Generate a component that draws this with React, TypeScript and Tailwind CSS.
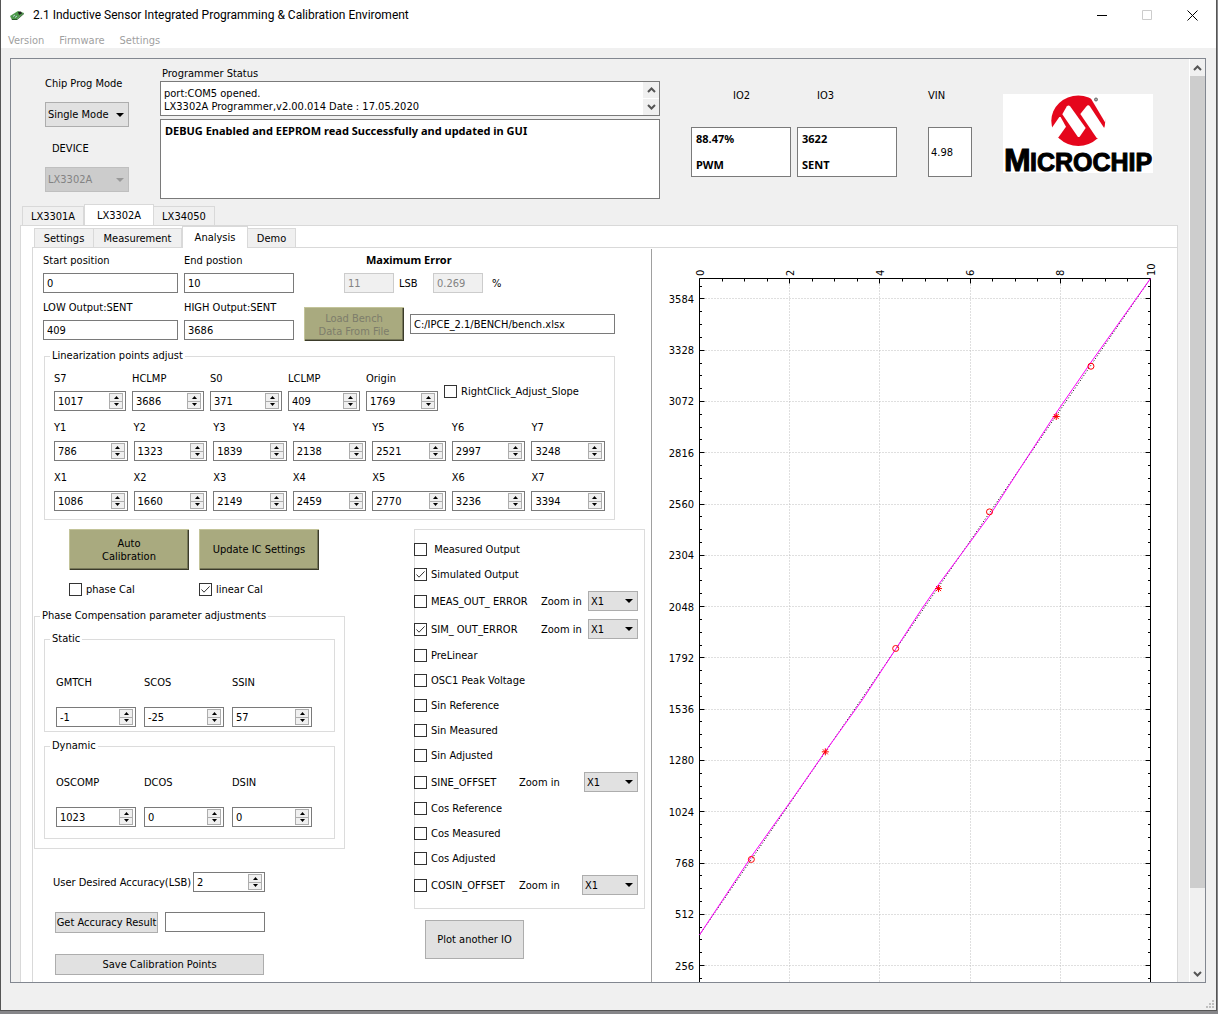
import { useId } from "react";
import type { ReactNode } from "react";
import clsx from "clsx";

const clampFields = [
  { name: "S7", value: "1017" },
  { name: "HCLMP", value: "3686" },
  { name: "S0", value: "371" },
  { name: "LCLMP", value: "409" },
  { name: "Origin", value: "1769" },
];

const yFields = ["786", "1323", "1839", "2138", "2521", "2997", "3248"];
const xFields = ["1086", "1660", "2149", "2459", "2770", "3236", "3394"];

const staticFields = [
  { name: "GMTCH", value: "-1" },
  { name: "SCOS", value: "-25" },
  { name: "SSIN", value: "57" },
];

const dynamicFields = [
  { name: "OSCOMP", value: "1023" },
  { name: "DCOS", value: "0" },
  { name: "DSIN", value: "0" },
];

type Trace = {
  name: string;
  checked?: boolean;
  zoom?: { label: string; select: string };
};

const traces: Trace[] = [
  { name: "\u00a0Measured Output" },
  { name: "Simulated Output", checked: true },
  { name: "MEAS_OUT_ ERROR", zoom: { label: "w-[127px]", select: "w-[50px]" } },
  { name: "SIM_ OUT_ERROR", checked: true, zoom: { label: "w-[127px]", select: "w-[50px]" } },
  { name: "PreLinear" },
  { name: "OSC1 Peak Voltage" },
  { name: "Sin Reference" },
  { name: "Sin Measured" },
  { name: "Sin Adjusted" },
  { name: "SINE_OFFSET", zoom: { label: "w-[105px]", select: "w-[54px]" } },
  { name: "Cos Reference" },
  { name: "Cos Measured" },
  { name: "Cos Adjusted" },
  { name: "COSIN_OFFSET", zoom: { label: "w-[105px]", select: "w-[56px]" } },
];

const inputClass = "h-5 border border-[#7a7a7a] bg-white px-[3px] pt-px outline-none";
const buttonClass = "border border-[#adadad] bg-[#e1e1e1] pt-px text-center";
const boldClass = "font-['Noto_Sans',sans-serif] font-bold";
const oliveClass =
  "bg-[#a9aa7f] pt-px text-center shadow-[inset_1px_1px_0_#c3c49a,inset_-1px_-1px_0_#3b3b2a,inset_-2px_-2px_0_#77785a]";

function TextField({ label, value, className }: { label: string; value: string; className: string }) {
  const id = useId();
  return (
    <div className={clsx("flex flex-col gap-[5px]", className)}>
      <label htmlFor={id} className="whitespace-nowrap">{label}</label>
      <input id={id} defaultValue={value} className={clsx(inputClass, "w-full")} />
    </div>
  );
}

function Spin({ id, value, className }: { id: string; value: string; className?: string }) {
  return (
    <div className={clsx("flex h-5 items-center border border-[#7a7a7a] bg-white pr-0.5", className)}>
      <input id={id} defaultValue={value} className="h-full w-full min-w-0 flex-1 px-[3px] pt-px outline-none" />
      <div className="flex h-4 w-3.5 flex-col border border-[#adadad] bg-[#f0f0f0]">
        <button aria-label="Increase" className="flex flex-1 items-center justify-center border-b border-[#adadad]">
          <svg width="5" height="3" viewBox="0 0 5 3"><path d="M2.5 0L5 3H0z" /></svg>
        </button>
        <button aria-label="Decrease" className="flex flex-1 items-center justify-center">
          <svg width="5" height="3" viewBox="0 0 5 3"><path d="M0 0H5L2.5 3z" /></svg>
        </button>
      </div>
    </div>
  );
}

function SpinField({ label, value, gap, className }: { label: string; value: string; gap: string; className?: string }) {
  const id = useId();
  return (
    <div className={clsx("flex flex-col", gap, className)}>
      <label htmlFor={id}>{label}</label>
      <Spin id={id} value={value} />
    </div>
  );
}

function Check({ label, checked, className }: { label: string; checked?: boolean; className?: string }) {
  return (
    <label className={clsx("flex items-center gap-1 whitespace-nowrap", className)}>
      <span className="grid size-[13px] shrink-0">
        <input
          type="checkbox"
          defaultChecked={checked}
          className="peer col-start-1 row-start-1 size-[13px] appearance-none border border-[#333] bg-white"
        />
        <svg
          viewBox="0 0 13 13"
          className="pointer-events-none invisible col-start-1 row-start-1 size-[13px] fill-none stroke-[#333] peer-checked:visible"
        >
          <path d="M2.5 6.5L5 9.2L10.6 3.4" />
        </svg>
      </span>
      <span className="pt-px">{label}</span>
    </label>
  );
}

function Combo({ id, value, disabled, className }: { id: string; value: string; disabled?: boolean; className: string }) {
  return (
    <div className={clsx("relative", className)}>
      <select
        id={id}
        disabled={disabled}
        className={clsx(
          "size-full appearance-none border px-0.5 pt-px outline-none",
          disabled ? "border-[#bfbfbf] bg-[#ccc] text-[#838383]" : "border-[#adadad] bg-[#e1e1e1]",
        )}
      >
        <option>{value}</option>
      </select>
      <svg
        viewBox="0 0 8 4"
        className={clsx(
          "pointer-events-none absolute top-1/2 right-[5px] h-1 w-2 -translate-y-1/2",
          disabled ? "fill-[#999]" : "fill-black",
        )}
      >
        <path d="M0 0H8L4 4z" />
      </svg>
    </div>
  );
}

function Group({ title, className, body, children }: { title: string; className: string; body: string; children: ReactNode }) {
  return (
    <fieldset className={clsx("min-w-0 border border-[#dcdcdc]", className)}>
      <legend className="ml-[5px] px-0.5">{title}</legend>
      <div className={body}>{children}</div>
    </fieldset>
  );
}

function Chevron({ down }: { down?: boolean }) {
  return (
    <svg viewBox="0 0 9 6" className="h-1.5 w-[9px] fill-none stroke-[#555] stroke-2">
      <path d={down ? "M1 1L4.5 4.5L8 1" : "M1 5L4.5 1.5L8 5"} />
    </svg>
  );
}

function TabBar({ label, tabs, active, className }: { label: string; tabs: { name: string; width: string }[]; active: string; className: string }) {
  return (
    <div role="tablist" aria-label={label} className={clsx("flex items-end", className)}>
      {tabs.map((tab) => (
        <button
          key={tab.name}
          role="tab"
          aria-selected={tab.name === active}
          className={clsx(
            "border-t border-r border-[#d9d9d9] text-center first:border-l",
            tab.width,
            tab.name === active ? "-mb-px h-[22px] border-l bg-white pt-px" : "h-[19px] bg-[#f0f0f0] pt-0.5",
          )}
        >
          {tab.name}
        </button>
      ))}
    </div>
  );
}

function TitleBar() {
  return (
    <header className="bg-white">
      <div className="flex h-[30px] items-center pl-[9px] font-['Roboto','Open_Sans',sans-serif] text-xs">
        <svg viewBox="0 0 14 10" className="h-2.5 w-3.5">
          <path d="M0 6L8 1L14 3L7 9H2z" fill="#4d9a4a" />
          <path d="M0 6L2 9H7L14 3V4L7 10H2z" fill="#2c5a2c" />
          <path d="M8 2L11 1.5L12 3.5L9 5z" fill="#222" />
          <path d="M3 6.5L5 5M5 7.5L7 6" stroke="#bcd" fill="none" />
        </svg>
        <h1 className="ml-[9px] whitespace-nowrap">
          2.1 Inductive Sensor Integrated Programming &amp; Calibration Enviroment
        </h1>
        <div className="ml-auto flex pr-px">
          <button aria-label="Minimize" className="flex h-7 w-[45px] items-center justify-center">
            <svg width="10" height="11" viewBox="0 0 10 11"><path d="M0 5.5H10" stroke="#000" /></svg>
          </button>
          <button aria-label="Maximize" disabled className="flex h-7 w-[45px] items-center justify-center">
            <svg width="10" height="10" viewBox="0 0 10 10"><path d="M.5 .5H9.5V9.5H.5z" fill="none" stroke="#ccc" /></svg>
          </button>
          <button aria-label="Close" className="flex h-7 w-[46px] items-center justify-center">
            <svg width="11" height="11" viewBox="0 0 11 11"><path d="M.5 .5L10.5 10.5M10.5 .5L.5 10.5" stroke="#000" /></svg>
          </button>
        </div>
      </div>
      <nav className="flex h-[18px] gap-[15px] pl-[7px] text-[#9f9f9f]">
        <button disabled className="h-5 pt-px">Version</button>
        <button disabled className="h-5 pt-px">Firmware</button>
        <button disabled className="h-5 pt-px">Settings</button>
      </nav>
    </header>
  );
}

function Logo() {
  return (
    <svg viewBox="0 0 150 79" role="img" aria-label="Microchip" className="h-[79px] w-[150px] overflow-visible bg-white">
      <ellipse cx="75.3" cy="26.8" rx="27" ry="25.2" fill="#e5061c" />
      <g fill="#fff">
        <path d="M49.3 33.3L56.3 23L57.6 23L63 32.7L55.7 43L44 47z" />
        <path d="M63.7 12.5Q65.5 10.5 67.3 12.5L82.7 34L77 42.2Q75.7 44 74.4 42.2L59.3 20.3z" />
        <path d="M83.3 12.5Q85.3 10 87 12.5L101.3 34.3L106 44L93.7 44L77.3 20z" />
        <path d="M87 3L102.3 28.7L106 0z" />
      </g>
      <circle cx="93" cy="5.5" r="1.5" fill="#aaa" stroke="#666" />
      <text y="77" fontFamily="Liberation Sans, sans-serif" fontWeight="700" stroke="#000" strokeWidth="1">
        <tspan x="1" fontSize="32">M</tspan>
        <tspan x="27" fontSize="25">ICROCHIP</tspan>
      </text>
    </svg>
  );
}

function StatusHeader() {
  const readout = clsx(
    boldClass,
    "h-[50px] resize-none overflow-hidden border border-[#7a7a7a] bg-white px-1 pt-1 leading-[13px] outline-none",
  );
  return (
    <section className="flex h-[146px] items-start pl-[34px]">
      <div className="flex w-[84px] flex-col pt-[18px]">
        <label htmlFor="mode" className="whitespace-nowrap">Chip Prog Mode</label>
        <Combo id="mode" value="Single Mode" className="mt-[11px] h-[25px]" />
        <label htmlFor="device" className="mt-[15px] pl-[7px]">DEVICE</label>
        <Combo id="device" value="LX3302A" disabled className="mt-[11px] h-[25px]" />
      </div>

      <div className="ml-[31px] flex w-[500px] flex-col pt-2">
        <label htmlFor="status" className="pl-0.5">Programmer Status</label>
        <div className="flex h-[35px] border border-[#7a7a7a] bg-white">
          <textarea
            id="status"
            readOnly
            value={"port:COM5 opened.\nLX3302A Programmer,v2.00.014 Date : 17.05.2020"}
            className="min-w-0 flex-1 resize-none overflow-hidden px-[3px] pt-[5px] leading-[13px] outline-none"
          />
          <div className="flex w-4 flex-col gap-px">
            <button aria-label="Scroll up" className="flex flex-1 items-center justify-center bg-[#f0f0f0]"><Chevron /></button>
            <button aria-label="Scroll down" className="flex flex-1 items-center justify-center bg-[#f0f0f0]"><Chevron down /></button>
          </div>
        </div>
        <textarea
          readOnly
          aria-label="Messages"
          value="DEBUG Enabled and EEPROM read Successfully and updated in GUI"
          className={clsx(boldClass, "mt-[3px] h-20 resize-none overflow-hidden border border-[#7a7a7a] bg-white px-1 pt-1 leading-[13px] outline-none")}
        />
      </div>

      <div className="ml-[31px] flex gap-1.5 pt-[30px]">
        <div className="flex w-[100px] flex-col gap-6">
          <label htmlFor="io2" className="pl-[42px]">IO2</label>
          <textarea id="io2" readOnly value={"88.47%\n\nPWM"} className={readout} />
        </div>
        <div className="flex w-[100px] flex-col gap-6">
          <label htmlFor="io3" className="pl-5">IO3</label>
          <textarea id="io3" readOnly value={"3622\n\nSENT"} className={readout} />
        </div>
      </div>
      <div className="ml-[31px] flex w-11 flex-col gap-6 pt-[30px]">
        <label htmlFor="vin">VIN</label>
        <input id="vin" readOnly value="4.98" className="h-[50px] border border-[#7a7a7a] bg-white px-0.5 pt-px outline-none" />
      </div>
      <div className="ml-[31px] pt-[35px]">
        <Logo />
      </div>
    </section>
  );
}

function RangeForm() {
  return (
    <section className="flex gap-2.5 pt-[5px] pl-2.5">
      <div className="grid grid-cols-[135px_110px] content-start gap-x-1.5 gap-y-2 pt-px">
        <TextField label="Start position" value="0" className="w-full" />
        <TextField label="End postion" value="10" className="w-full" />
        <TextField label="LOW Output:SENT" value="409" className="w-full" />
        <TextField label="HIGH Output:SENT" value="3686" className="w-full" />
      </div>
      <div className="w-[311px]">
        <h2 className={clsx(boldClass, "pl-[62px]")}>Maximum Error</h2>
        <div className="mt-1.5 flex items-center pl-10">
          <input id="lsb" disabled defaultValue="11" className="h-5 w-[50px] border border-[#ccc] bg-[#f0f0f0] px-[3px] pt-px text-[#838383]" />
          <label htmlFor="lsb" className="w-[39px] pt-px pl-[5px]">LSB</label>
          <input id="percent" disabled defaultValue="0.269" className="h-5 w-[50px] border border-[#ccc] bg-[#f0f0f0] px-[3px] pt-px text-[#838383]" />
          <label htmlFor="percent" className="pt-px pl-[9px]">%</label>
        </div>
        <div className="mt-3.5 flex items-center gap-1.5">
          <button disabled className={clsx(oliveClass, "h-[34px] w-[100px] leading-[13px] text-[#7d7d6b]")}>
            Load Bench
            <br />
            Data From File
          </button>
          <input aria-label="Bench file" defaultValue="C:/IPCE_2.1/BENCH/bench.xlsx" className={clsx(inputClass, "min-w-0 flex-1")} />
        </div>
      </div>
    </section>
  );
}

function Linearization() {
  return (
    <Group title="Linearization points adjust" className="mt-2 ml-[11px] w-[571px]" body="px-[9px] pt-[9px] pb-2">
      <div className="flex gap-1.5">
        {clampFields.map((f) => (
          <SpinField key={f.name} label={f.name} value={f.value} gap="gap-[5px]" className="w-[72px]" />
        ))}
        <Check label="RightClick_Adjust_Slope" />
      </div>
      <div className="mt-2.5 grid grid-cols-7 gap-x-1.5 gap-y-2.5">
        {yFields.map((v, i) => (
          <SpinField key={v} label={`Y${i + 1}`} value={v} gap="gap-1.5" />
        ))}
        {xFields.map((v, i) => (
          <SpinField key={v} label={`X${i + 1}`} value={v} gap="gap-1.5" />
        ))}
      </div>
    </Group>
  );
}

function Calibration() {
  return (
    <div>
      <div className="grid grid-cols-[120px_120px] gap-x-2.5 gap-y-3 pl-9">
        <button className={clsx(oliveClass, "h-[41px] leading-[13px]")}>
          Auto
          <br />
          Calibration
        </button>
        <button className={clsx(oliveClass, "h-[41px]")}>Update IC Settings</button>
        <Check label="phase Cal" className="h-3.5" />
        <Check label="linear Cal" checked className="h-3.5" />
      </div>

      <Group title="Phase Compensation parameter adjustments" className="mt-[13px] ml-px" body="px-[9px] pt-[9px] pb-[9px]">
        <Group title="Static" className="w-full" body="px-[11px] pt-[30px] pb-1">
          <div className="grid grid-cols-[80px_80px_80px] gap-2">
            {staticFields.map((f) => (
              <SpinField key={f.name} label={f.name} value={f.value} gap="gap-[17px]" />
            ))}
          </div>
        </Group>
        <Group title="Dynamic" className="mt-[7px]" body="px-[11px] pt-[23px] pb-[11px]">
          <div className="grid grid-cols-[80px_80px_80px] gap-2">
            {dynamicFields.map((f) => (
              <SpinField key={f.name} label={f.name} value={f.value} gap="gap-[17px]" />
            ))}
          </div>
        </Group>
      </Group>

      <div className="mt-[23px] flex items-center pl-5">
        <label htmlFor="accuracy" className="w-[140px] pt-px whitespace-nowrap">User Desired Accuracy(LSB)</label>
        <Spin id="accuracy" value="2" className="w-[72px]" />
      </div>
      <div className="mt-5 flex items-start gap-[7px] pl-[22px]">
        <button className={clsx(buttonClass, "h-[21px] w-[103px] whitespace-nowrap")}>Get Accuracy Result</button>
        <input aria-label="Accuracy result" className={clsx(inputClass, "w-[100px]")} />
      </div>
      <button className={clsx(buttonClass, "mt-[21px] ml-[22px] h-[21px] w-[209px]")}>Save Calibration Points</button>
    </div>
  );
}

function TracePicker() {
  return (
    <div>
      <div className="border border-[#dcdcdc] pt-[7px] pr-1.5 pb-[9px]">
        {traces.map((t) => (
          <div key={t.name} className={clsx("-ml-px flex items-center", t.zoom ? "h-7" : "h-[25px]")}>
            <Check label={t.name} checked={t.checked} className={t.zoom?.label} />
            {t.zoom && (
              <>
                <label htmlFor={t.name} className="pt-px">Zoom in</label>
                <Combo id={t.name} value="X1" className={clsx("ml-auto h-5", t.zoom.select)} />
              </>
            )}
          </div>
        ))}
      </div>
      <button className={clsx(buttonClass, "mt-[11px] ml-[11px] h-[39px] w-[99px]")}>Plot another IO</button>
    </div>
  );
}

// plot area inside the 525x733 canvas
const LEFT = 47.5;
const RIGHT = 498.5;
const TOP = 29.5;
const px = (v: number) => LEFT + (v / 10) * (RIGHT - LEFT);
const py = (v: number) => TOP + ((3686 - v) / 256) * 51.28;
const snap = (v: number) => Math.floor(v) + 0.5;

const xMajor = [0, 2, 4, 6, 8, 10];
const xMinor = Array.from({ length: 21 }, (_, i) => i / 2);
const yMajor = Array.from({ length: 14 }, (_, i) => 256 * (i + 1));
const yMinor = Array.from({ length: 55 }, (_, i) => 64 * (i + 3));

const simulated = [
  [0, 409], [1.15, 800], [2.1, 1101], [2.8, 1328], [3.6, 1579], [4.35, 1836],
  [4.9, 2027], [5.3, 2158], [6, 2370], [6.45, 2508], [7.2, 2770], [7.9, 3012], [8.7, 3274], [10, 3686],
];
const circles = [[1.15, 786], [4.35, 1839], [6.43, 2521], [8.68, 3248]];
const stars = [[2.79, 1323], [5.3, 2138], [7.91, 2997]];

function Chart() {
  return (
    <svg width="525" height="733" viewBox="0 0 525 733" role="img" aria-label="Output versus position" fontSize="11">
      <g stroke="#bfbfbf" strokeDasharray="1 2">
        {xMajor.slice(1, 5).map((v) => (
          <path key={v} d={`M${snap(px(v))} ${TOP}V733`} />
        ))}
        {yMajor.map((v) => (
          <path key={v} d={`M${LEFT} ${snap(py(v))}H${RIGHT}`} />
        ))}
      </g>
      <g stroke="#000" fill="none">
        <path d={`M${LEFT} 733V${TOP}H${RIGHT}V733`} />
        {xMinor.map((v) => (
          <path key={v} d={`M${snap(px(v))} ${TOP}v${v % 2 === 0 ? 5 : 3}`} />
        ))}
        {yMinor.map((v) => {
          const len = v % 256 === 0 ? 5 : 2.5;
          return <path key={v} d={`M${LEFT} ${snap(py(v))}h${len}M${RIGHT} ${snap(py(v))}h${-len}`} />;
        })}
      </g>
      {yMajor.map((v) => (
        <text key={v} x="42" y={Math.round(py(v)) + 4} textAnchor="end">{v}</text>
      ))}
      {xMajor.map((v) => (
        <text key={v} transform={`translate(${Math.round(px(v)) + 4} 27) rotate(-90)`}>{v}</text>
      ))}
      <path d={`M${px(0)} ${py(409)}L${px(10)} ${py(3686)}`} stroke="#000" strokeDasharray="1 2" />
      <polyline
        points={simulated.map(([x, y]) => `${px(x)},${py(y)}`).join(" ")}
        fill="none"
        stroke="#f0f"
      />
      <g stroke="#f00" fill="none">
        {circles.map(([x, y]) => (
          <circle key={x} cx={px(x)} cy={py(y)} r="3" />
        ))}
        {stars.map(([x, y]) => (
          <path key={x} d={`M${px(x)} ${py(y)}m-3.5 0h7m-3.5-3.5v7m-2.5-6l5 5m0-5l-5 5`} />
        ))}
      </g>
    </svg>
  );
}

export default function App() {
  return (
    <div className="h-screen bg-[#868689] pr-px pb-[3px] font-['DejaVu_Sans_Condensed','Noto_Sans',sans-serif] text-[11px] leading-[14px] text-black">
      <div className="flex h-full flex-col border-r border-b border-l border-[#555] bg-[#f0f0f0]">
        <TitleBar />
        <main className="mt-2.5 mr-2.5 ml-[9px] flex min-h-0 flex-1 border border-[#828790]">
          <div className="flex min-w-0 flex-1 flex-col overflow-hidden">
            <StatusHeader />
            <TabBar
              label="Device"
              active="LX3302A"
              className="ml-[11px] h-5"
              tabs={[
                { name: "LX3301A", width: "w-[62px]" },
                { name: "LX3302A", width: "w-[70px]" },
                { name: "LX34050", width: "w-[61px]" },
              ]}
            />
            <div className="mr-[11px] ml-[9px] flex-1 border-t border-r border-l border-[#d9d9d9] bg-white pl-[11px]">
              <TabBar
                label="View"
                active="Analysis"
                className="ml-0.5 h-[21px]"
                tabs={[
                  { name: "Settings", width: "w-[60px]" },
                  { name: "Measurement", width: "w-[88px]" },
                  { name: "Analysis", width: "w-[66px]" },
                  { name: "Demo", width: "w-12" },
                ]}
              />
              <div className="flex border-t border-l border-[#d9d9d9]">
                <div className="w-[618px] shrink-0">
                  <RangeForm />
                  <Linearization />
                  <div className="mt-[9px] grid grid-cols-[312px_231px] gap-x-[69px]">
                    <Calibration />
                    <TracePicker />
                  </div>
                </div>
                <div className="mt-px min-w-0 flex-1 border-l border-[#a0a0a0]">
                  <Chart />
                </div>
              </div>
            </div>
          </div>
          <div className="flex w-4 shrink-0 flex-col border-l border-white">
            <button aria-label="Scroll up" className="flex h-[17px] items-center justify-center"><Chevron /></button>
            <div className="flex-[812] bg-[#cdcdcd]" />
            <div className="flex-[77]" />
            <button aria-label="Scroll down" className="flex h-[17px] items-center justify-center"><Chevron down /></button>
          </div>
        </main>
        <footer className="flex h-[27px] items-end justify-end p-0.5">
          <svg width="8" height="8" viewBox="0 0 8 8" fill="#bfbfbf">
            <path d="M6 0h2v2H6zM3 3h2v2H3zM6 3h2v2H6zM0 6h2v2H0zM3 6h2v2H3zM6 6h2v2H6z" />
          </svg>
        </footer>
      </div>
    </div>
  );
}
